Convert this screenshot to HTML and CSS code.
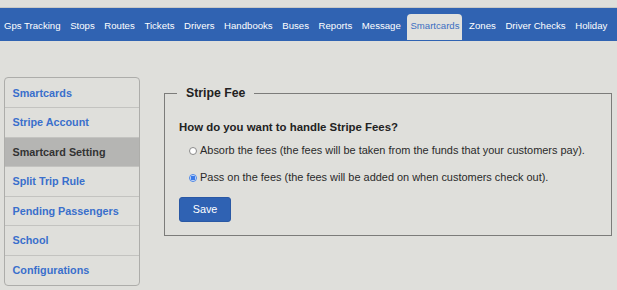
FILE: index.html
```html
<!DOCTYPE html>
<html>
<head>
<meta charset="utf-8">
<link rel="stylesheet" href="styles.css">
</head>
<body>
<nav class="topnav">
  <a class="nav-item">Gps Tracking</a>
  <a class="nav-item">Stops</a>
  <a class="nav-item">Routes</a>
  <a class="nav-item">Tickets</a>
  <a class="nav-item">Drivers</a>
  <a class="nav-item">Handbooks</a>
  <a class="nav-item">Buses</a>
  <a class="nav-item">Reports</a>
  <a class="nav-item">Message</a>
  <a class="nav-item active">Smartcards</a>
  <a class="nav-item">Zones</a>
  <a class="nav-item">Driver Checks</a>
  <a class="nav-item">Holiday</a>
</nav>
<div class="main">
  <ul class="sidebar">
    <li class="side-item">Smartcards</li>
    <li class="side-item">Stripe Account</li>
    <li class="side-item active">Smartcard Setting</li>
    <li class="side-item">Split Trip Rule</li>
    <li class="side-item">Pending Passengers</li>
    <li class="side-item">School</li>
    <li class="side-item">Configurations</li>
  </ul>
  <fieldset class="panel">
    <legend class="panel-title">Stripe Fee</legend>
    <p class="question">How do you want to handle Stripe Fees?</p>
    <label class="option first"><input type="radio" name="fee" class="radio"><span>Absorb the fees (the fees will be taken from the funds that your customers pay).</span></label>
    <label class="option second"><input type="radio" name="fee" class="radio" checked><span>Pass on the fees (the fees will be added on when customers check out).</span></label>
    <button class="save">Save</button>
  </fieldset>
</div>
</body>
</html>
```
FILE: styles.css
```css
* { box-sizing: border-box; }
html, body { margin: 0; padding: 0; }
body {
  background: #dfdfdb;
  font-family: "Liberation Sans", Arial, sans-serif;
  color: #222;
  padding-top: 7px;
}
.topnav {
  display: flex;
  align-items: flex-end;
  gap: 3.65px;
  height: 34px;
  background: #3063b2;
  border-top: 1px solid #c9c9c6;
  padding-left: 1px;
  padding-bottom: 1px;
}
.nav-item {
  font-size: 9.6px;
  color: #fff;
  padding: 0 3px;
  height: 26px;
  line-height: 24px;
  white-space: nowrap;
}
.nav-item.active {
  background: #e1e1dd;
  color: #3b6fc2;
  border-radius: 4px 4px 0 0;
}
.main {
  display: flex;
  align-items: flex-start;
  gap: 24px;
  padding: 36px 0 0 4px;
}
.sidebar {
  list-style: none;
  margin: 0;
  padding: 0;
  width: 136px;
  border: 1.5px solid #adadaa;
  border-radius: 4px;
  overflow: hidden;
}
.side-item {
  height: 29.6px;
  line-height: 29px;
  padding-left: 7.5px;
  font-size: 10.8px;
  font-weight: bold;
  color: #3a6fcc;
  border-top: 1.5px solid #c3c3c0;
  white-space: nowrap;
}
.side-item:first-child { border-top: none; height: 29px; line-height: 30px; }
.side-item.active {
  background: #b5b5b3;
  color: #333;
}
.panel {
  margin: 9px 0 0 0;
  width: 448px;
  border: 1px solid #7c7c7a;
  padding: 0 14px 13px 14px;
  min-width: 0;
}
.panel-title {
  font-size: 12.3px;
  font-weight: bold;
  line-height: 14px;
  padding: 0 9px;
  margin-left: -2px;
  color: #222;
}
.question {
  margin: 21px 0 0 0;
  font-size: 11.4px;
  font-weight: bold;
  line-height: 13px;
}
.option {
  display: flex;
  align-items: center;
  font-size: 10.95px;
  line-height: 13px;
  padding-left: 10px;
  color: #2a2a2a;
  white-space: nowrap;
}
.option.first { margin-top: 10px; }
.option.second { margin-top: 14px; }
.radio {
  -webkit-appearance: none;
  appearance: none;
  width: 8px;
  height: 8px;
  margin: 0 3px 0 0;
  border-radius: 50%;
  border: 1px solid #8a8a8a;
  background: #fff;
  flex: none;
}
.radio:checked {
  border-color: #4a86e8;
  background: radial-gradient(circle, #3b7be8 0 2.2px, #e4ecfb 2.6px);
}
.save {
  display: block;
  margin-top: 12.5px;
  width: 52px;
  height: 25px;
  background: #2f62b3;
  color: #fff;
  border: 1px solid #2a58a4;
  border-radius: 3px;
  font-family: "Liberation Sans", Arial, sans-serif;
  font-size: 10.8px;
  padding: 0;
}
```
